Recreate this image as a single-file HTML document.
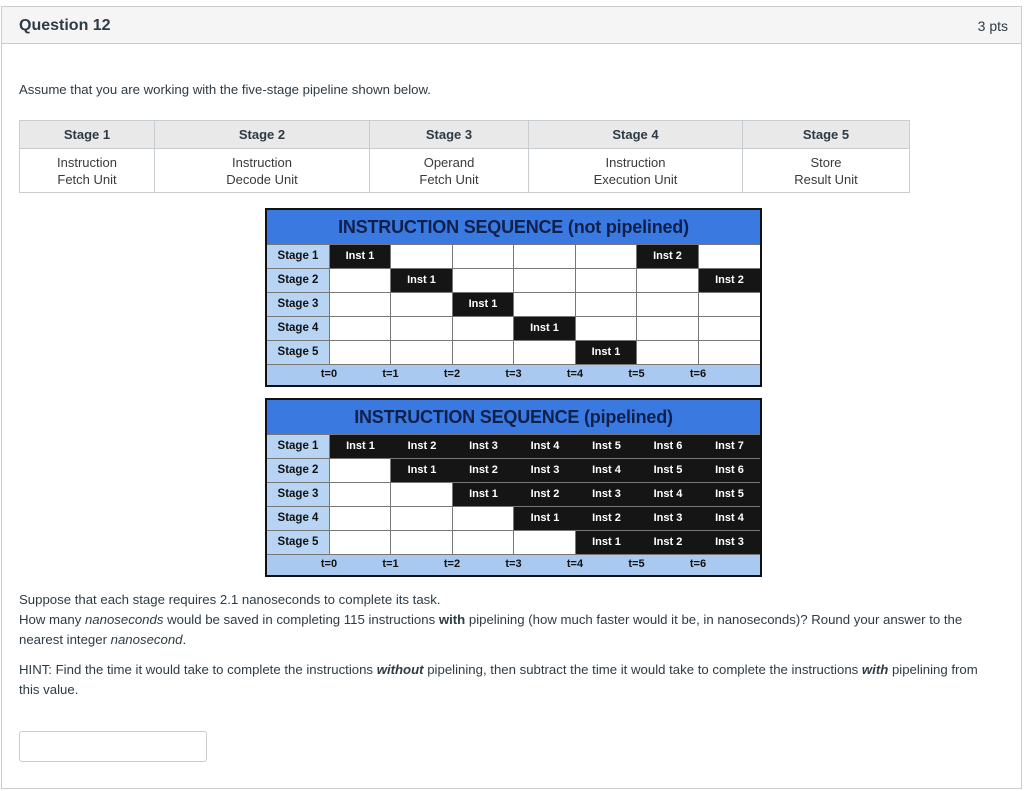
<!DOCTYPE html>
<html><head><meta charset="utf-8"><style>
*{margin:0;padding:0;box-sizing:border-box}
body{width:1024px;height:791px;background:#fff;font-family:"Liberation Sans",sans-serif;color:#2d3b45;position:relative;overflow:hidden}
.outer{position:absolute;left:1px;top:6px;width:1021px;height:783px;border:1px solid #c7cdd1}
.hdr{position:absolute;left:1px;top:6px;width:1021px;height:38px;background:#f5f5f5;border:1px solid #c7cdd1}
.hdr b{position:absolute;left:17px;top:10px;font-size:16px;color:#2d3b45}
.hdr span{position:absolute;right:13px;top:11px;font-size:14px}
.t{position:absolute;left:19px;font-size:13.2px;line-height:20px;white-space:nowrap}
table.st{position:absolute;left:19px;top:120px;border-collapse:collapse;font-size:13px;text-align:center}
table.st td{border:1px solid #c7cdd1;line-height:17px}
table.st tr.h td{background:#e9e9e9;font-weight:bold;height:28px;color:#2d3b45}
table.st tr.b td{height:44px;color:#3a3a3a}
.dg{position:absolute;left:265px;width:497px;height:179px;background:#777;border:2px solid #111}
.dg .title{position:absolute;left:0;top:0;width:493px;height:34px;background:#3a7ae0;color:#10204a;font-weight:bold;font-size:18px;text-align:center;line-height:34px;letter-spacing:-0.2px}
.dg .foot{position:absolute;left:0;top:155px;width:493px;height:20px;background:#a9c9f1}
.dg .foot span{position:absolute;top:3px;font-size:11px;font-weight:bold;color:#111;transform:translateX(-50%)}
.c{position:absolute;height:23px;font-size:11px;font-weight:bold;text-align:center;line-height:23px}
.w{background:#fff}
.k{background:#151515;color:#fff}
.l{background:#b8d4f4;color:#111;width:62px;font-size:11.5px}
.input{position:absolute;left:19px;top:731px;width:188px;height:31px;border:1px solid #c7cdd1;border-radius:3px}
</style></head><body>
<div class="outer"></div>
<div class="hdr"><b>Question 12</b><span>3 pts</span></div>
<div class="t" style="top:80px">Assume that you are working with the five-stage pipeline shown below.</div>
<table class="st">
<tr class="h"><td style="width:135px">Stage 1</td><td style="width:215px">Stage 2</td><td style="width:159px">Stage 3</td><td style="width:214px">Stage 4</td><td style="width:167px">Stage 5</td></tr>
<tr class="b"><td>Instruction<br>Fetch Unit</td><td>Instruction<br>Decode Unit</td><td>Operand<br>Fetch Unit</td><td>Instruction<br>Execution Unit</td><td>Store<br>Result Unit</td></tr>
</table>

<div class="dg" style="top:208px" id="d1"><div class="title">INSTRUCTION SEQUENCE (not pipelined)</div></div>
<div class="dg" style="top:398px" id="d2"><div class="title">INSTRUCTION SEQUENCE (pipelined)</div></div>

<div class="t" style="top:590px">Suppose that each stage requires 2.1 nanoseconds to complete its task.</div>
<div class="t" style="top:610px">How many <i>nanoseconds</i> would be saved in completing 115 instructions <b>with</b> pipelining (how much faster would it be, in nanoseconds)? Round your answer to the</div>
<div class="t" style="top:630px">nearest integer <i>nanosecond</i>.</div>
<div class="t" style="top:660px">HINT: Find the time it would take to complete the instructions <b><i>without</i></b> pipelining, then subtract the time it would take to complete the instructions <b><i>with</i></b> pipelining from</div>
<div class="t" style="top:680px">this value.</div>
<div class="input"></div>
<script>
function build(id,grid){
 var d=document.getElementById(id),h='';
 for(var r=0;r<5;r++){
  var y=35+r*24;
  h+='<div class="c l" style="left:0;top:'+y+'px">Stage '+(r+1)+'</div>';
  for(var c=0;c<7;c++){
   var v=grid[r][c];
   var x=Math.round(63+c*61.43), x2=Math.round(63+(c+1)*61.43);
   var wd=(c==6)?(493-x):(x2-x-1);
   if(v&&c<6&&grid[r][c+1])wd=x2-x;
   h+='<div class="c '+(v?'k':'w')+'" style="left:'+x+'px;width:'+wd+'px;top:'+y+'px">'+(v?'Inst '+v:'')+'</div>';
  }
 }
 h+='<div class="foot">';
 for(var i=0;i<7;i++)h+='<span style="left:'+(62+i*61.5)+'px">t='+i+'</span>';
 h+='</div>';
 d.innerHTML+=h;
}
build('d1',[[1,0,0,0,0,2,0],[0,1,0,0,0,0,2],[0,0,1,0,0,0,0],[0,0,0,1,0,0,0],[0,0,0,0,1,0,0]]);
var g=[];for(var r=0;r<5;r++){g.push([]);for(var c=0;c<7;c++){var v=c-r+1;g[r].push(v>0?v:0);}}
build('d2',g);
</script>
</body></html>
